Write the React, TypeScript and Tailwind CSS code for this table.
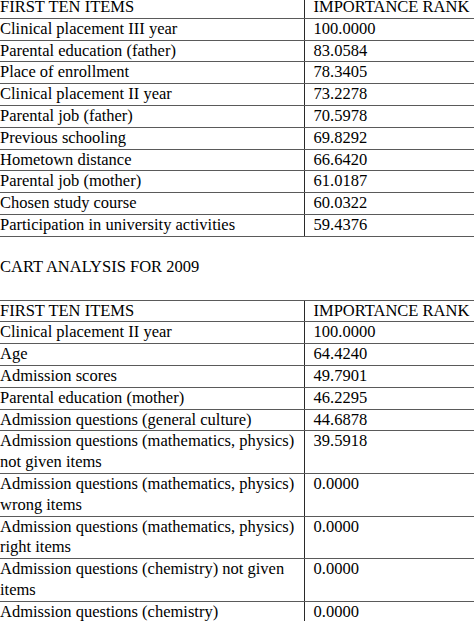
import React from 'react';

type Row = { item: string; rank: string };

const cart2008: Row[] = [
  { item: 'Clinical placement III year', rank: '100.0000' },
  { item: 'Parental education (father)', rank: '83.0584' },
  { item: 'Place of enrollment', rank: '78.3405' },
  { item: 'Clinical placement II year', rank: '73.2278' },
  { item: 'Parental job (father)', rank: '70.5978' },
  { item: 'Previous schooling', rank: '69.8292' },
  { item: 'Hometown distance', rank: '66.6420' },
  { item: 'Parental job (mother)', rank: '61.0187' },
  { item: 'Chosen study course', rank: '60.0322' },
  { item: 'Participation in university activities', rank: '59.4376' },
];

const cart2009: Row[] = [
  { item: 'Clinical placement II year', rank: '100.0000' },
  { item: 'Age', rank: '64.4240' },
  { item: 'Admission scores', rank: '49.7901' },
  { item: 'Parental education (mother)', rank: '46.2295' },
  { item: 'Admission questions (general culture)', rank: '44.6878' },
  { item: 'Admission questions (mathematics, physics) not given items', rank: '39.5918' },
  { item: 'Admission questions (mathematics, physics) wrong items', rank: '0.0000' },
  { item: 'Admission questions (mathematics, physics) right items', rank: '0.0000' },
  { item: 'Admission questions (chemistry) not given items', rank: '0.0000' },
  { item: 'Admission questions (chemistry)', rank: '0.0000' },
];

const TableRow: React.FC<{ left: string; right: string }> = ({ left, right }) => (
  <div className="grid grid-cols-[305px_1fr] border-b border-[#5a5a5a]">
    <div className="border-r-[1.5px] border-[#2a2a2a] pr-1">{left}</div>
    <div className="pl-[8.5px] whitespace-nowrap">{right}</div>
  </div>
);

const CartTable: React.FC<{ rows: Row[]; topLine?: boolean }> = ({ rows, topLine }) => (
  <div className={topLine ? 'border-t border-[#5a5a5a]' : ''}>
    <TableRow left="FIRST TEN ITEMS" right="IMPORTANCE RANK" />
    {rows.map((r, i) => (
      <TableRow key={i} left={r.item} right={r.rank} />
    ))}
  </div>
);

const App: React.FC = () => {
  return (
    <div
      className="w-[474px] h-[621px] overflow-hidden bg-white text-black text-[16.5px] leading-[20.8px]"
      style={{ fontFamily: '"Liberation Serif", "Times New Roman", serif' }}
    >
      <div className="mt-[-3px]">
        {/* CART 2008 */}
        <CartTable rows={cart2008} />

        <div className="mt-[20px] mb-[22px]">CART ANALYSIS FOR 2009</div>

        {/* CART 2009 */}
        <CartTable rows={cart2009} topLine />
      </div>
    </div>
  );
};

export default App;
